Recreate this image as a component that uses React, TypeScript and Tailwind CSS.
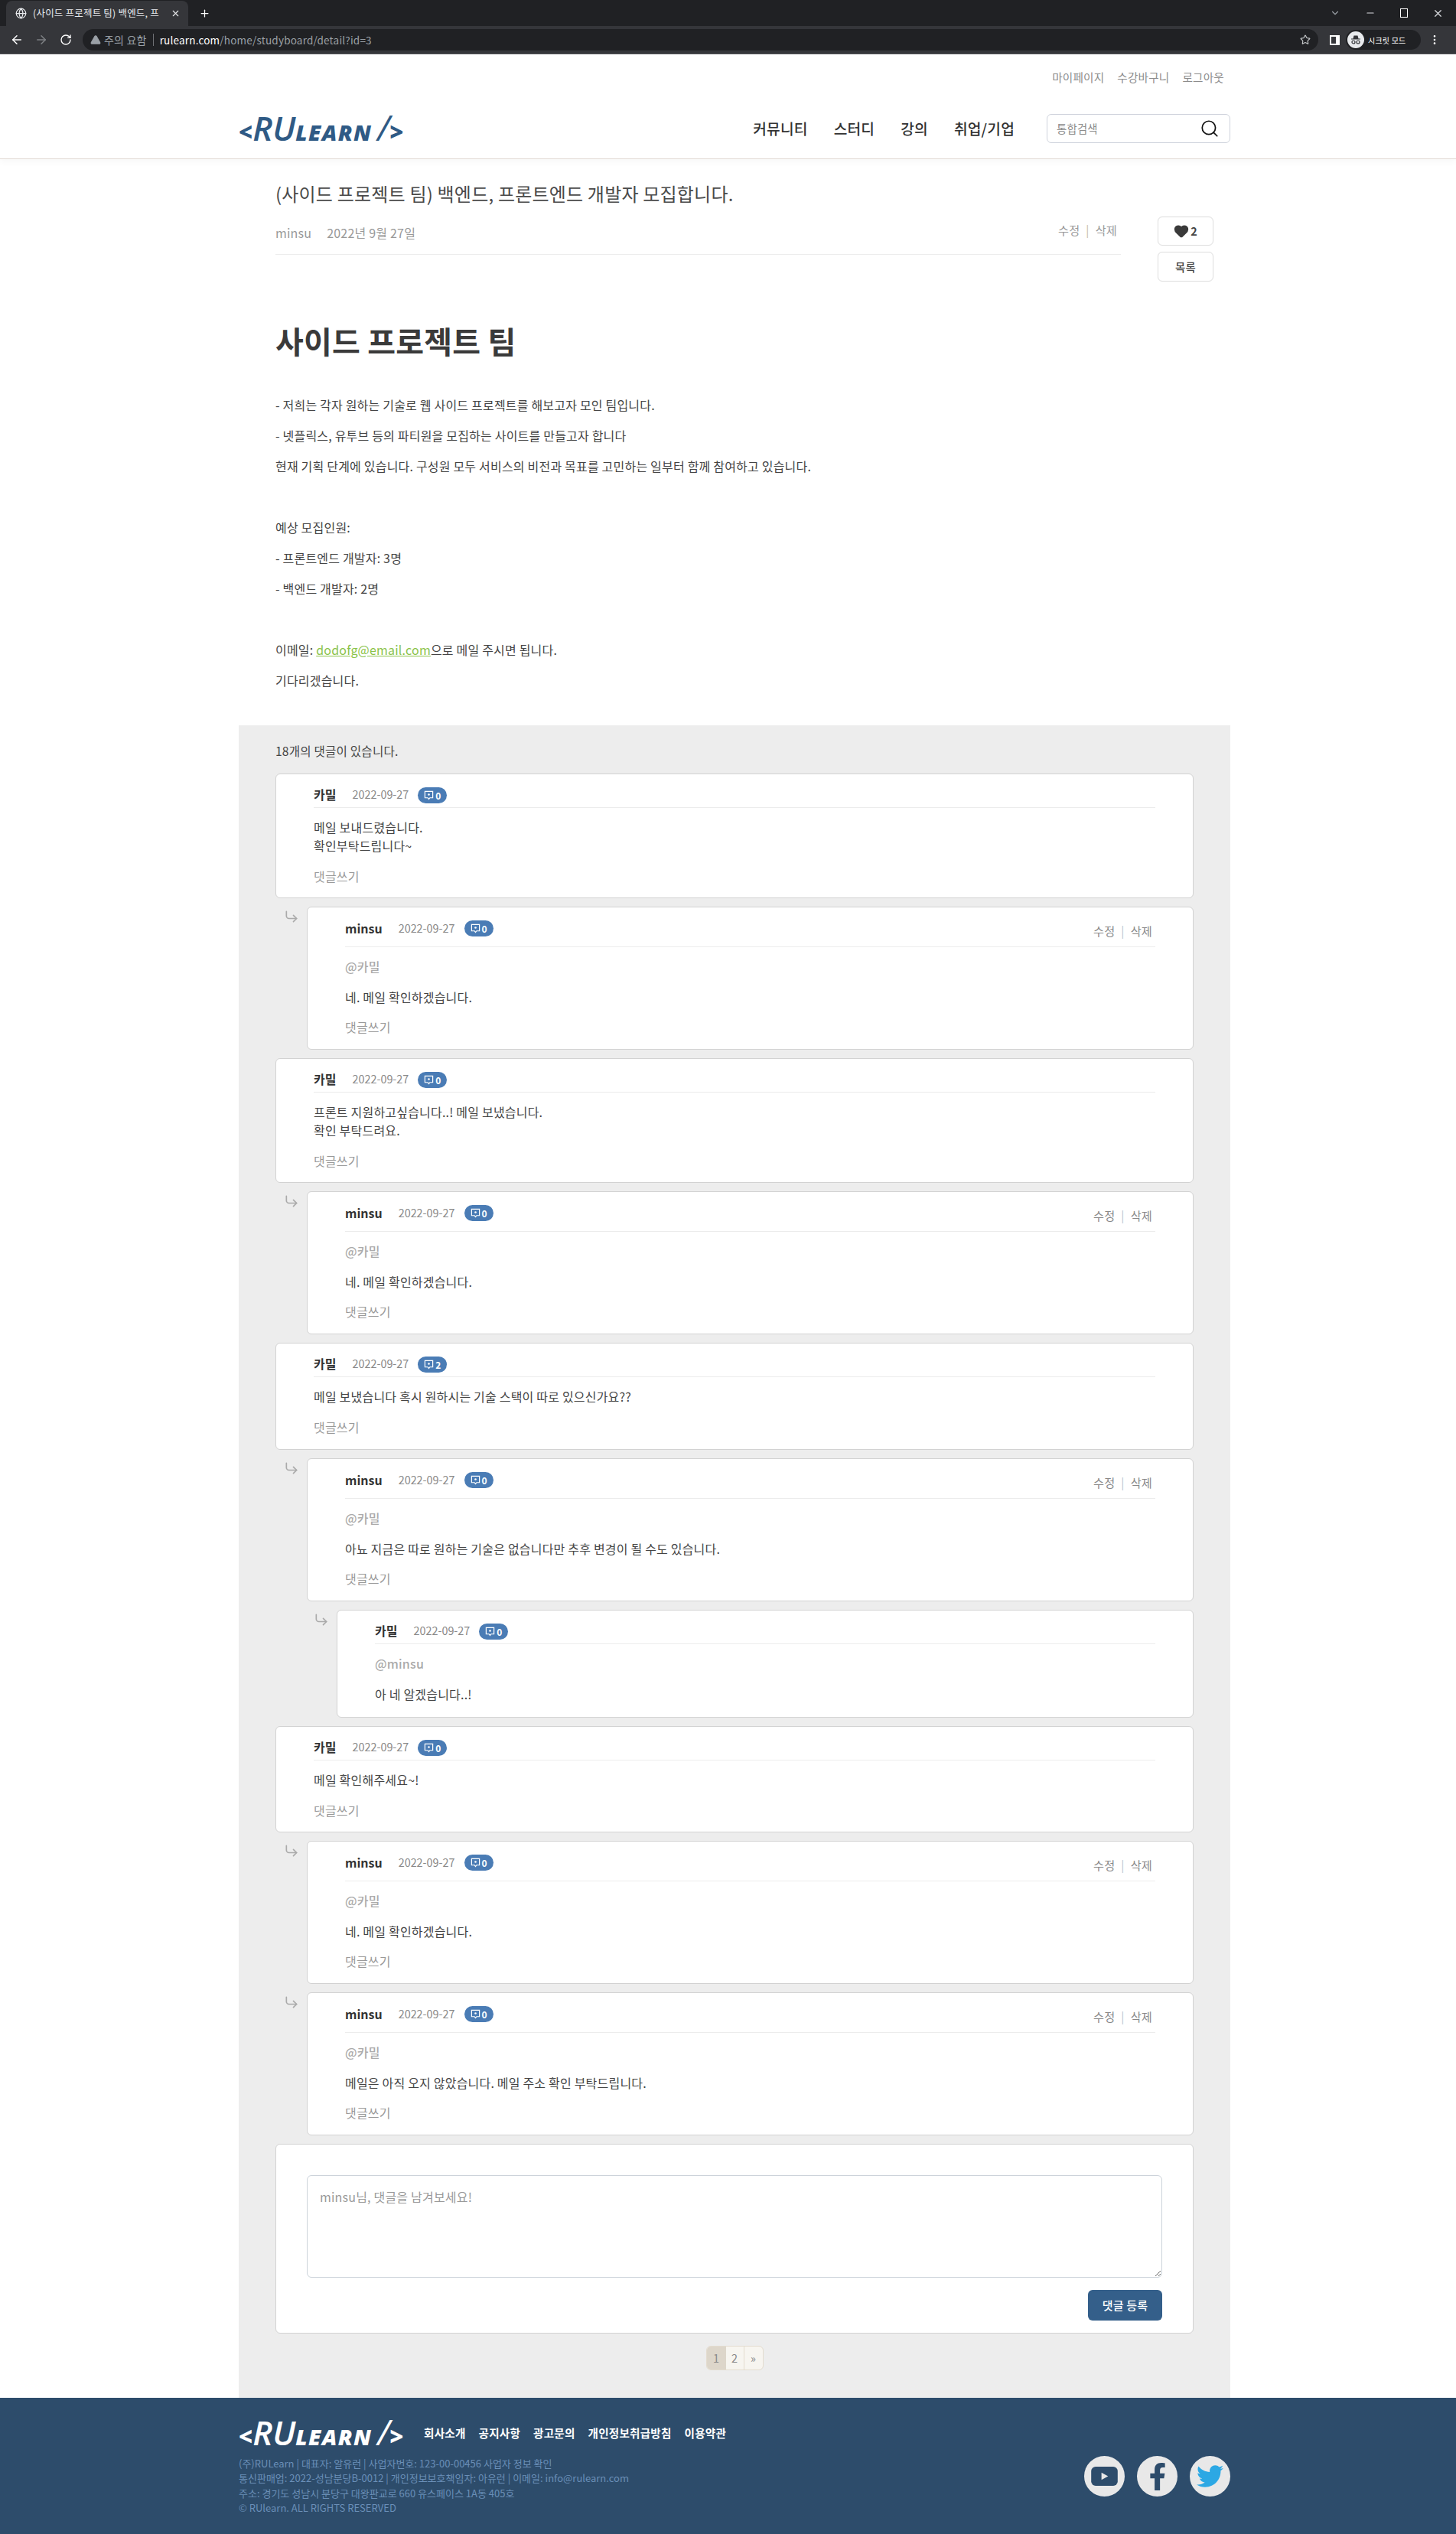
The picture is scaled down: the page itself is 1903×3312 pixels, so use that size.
import { ArrowLeft, ArrowRight, CornerDownRight, RotateCw, Star, Search, Heart, Plus, X, Minus, ChevronDown, MoreVertical, AlertTriangle, Globe } from "lucide-react";
import { FaFacebookF, FaTwitter } from "react-icons/fa";

type Item = {
  id: number;
  name: string;
  level: 0 | 1 | 2;
  count: number;
  mention?: string;
  lines: string[];
  mine?: boolean;
  noReply?: boolean;
  height: string;
};

const comments: Item[] = [
  { id: 1, name: "카밀", level: 0, count: 0, lines: ["메일 보내드렸습니다.", "확인부탁드립니다~"], height: "h-[163px]" },
  { id: 2, name: "minsu", level: 1, count: 0, mention: "@카밀", lines: ["네. 메일 확인하겠습니다."], mine: true, height: "h-[187px]" },
  { id: 3, name: "카밀", level: 0, count: 0, lines: ["프론트 지원하고싶습니다..! 메일 보냈습니다.", "확인 부탁드려요."], height: "h-[163px]" },
  { id: 4, name: "minsu", level: 1, count: 0, mention: "@카밀", lines: ["네. 메일 확인하겠습니다."], mine: true, height: "h-[187px]" },
  { id: 5, name: "카밀", level: 0, count: 2, lines: ["메일 보냈습니다 혹시 원하시는 기술 스택이 따로 있으신가요??"], height: "h-[140px]" },
  { id: 6, name: "minsu", level: 1, count: 0, mention: "@카밀", lines: ["아뇨 지금은 따로 원하는 기술은 없습니다만 추후 변경이 될 수도 있습니다."], mine: true, height: "h-[187px]" },
  { id: 7, name: "카밀", level: 2, count: 0, mention: "@minsu", lines: ["아 네 알겠습니다..!"], noReply: true, height: "h-[141px]" },
  { id: 8, name: "카밀", level: 0, count: 0, lines: ["메일 확인해주세요~!"], height: "h-[139px]" },
  { id: 9, name: "minsu", level: 1, count: 0, mention: "@카밀", lines: ["네. 메일 확인하겠습니다."], mine: true, height: "h-[187px]" },
  { id: 10, name: "minsu", level: 1, count: 0, mention: "@카밀", lines: ["메일은 아직 오지 않았습니다. 메일 주소 확인 부탁드립니다."], mine: true, height: "h-[187px]" },
];

function BrowserBar() {
  return (
    <div className="h-[71px] bg-[#35363a] text-white border-b border-[#55565b]">
      <div className="h-[34px] bg-[#202124] flex items-end pl-2">
        <div className="w-[238px] h-[33px] bg-[#35363a] rounded-t-lg flex items-center pl-3 pr-2 text-[12.5px] text-[#e8eaed]">
          <Globe size={15} className="shrink-0 mr-[8px]" />
          <span className="w-[172px] whitespace-nowrap">(사이드 프로젝트 팀) 백엔드, 프</span>
          <X size={13} className="ml-2" />
        </div>
        <Plus size={15} className="ml-[14px] mb-[9px]" />
        <div className="flex-1 flex items-center justify-end self-center gap-[32px] pr-4 text-[#dadce0]">
          <ChevronDown size={14} className="text-[#9aa0a6]" />
          <Minus size={14} />
          <div className="w-[10px] h-[12px] border border-white" />
          <X size={15} />
        </div>
      </div>
      <div className="h-[36px] flex items-center pl-[13px]">
        <ArrowLeft size={18} />
        <ArrowRight size={18} className="ml-[14px] text-[#7e8084]" />
        <RotateCw size={16} className="ml-[15px]" />
        <div className="ml-[14px] w-[1615px] h-[28px] rounded-full bg-[#202124] flex items-center pl-[10px] text-[13.5px]">
          <AlertTriangle size={14} className="text-[#9aa0a6] fill-[#9aa0a6]" />
          <span className="ml-[4px] text-[14px] text-[#9aa0a6]">주의 요함</span>
          <span className="mx-2 w-px h-[16px] bg-[#6f7175]" />
          <span className="text-white">rulearn.com</span>
          <span className="text-[#9aa0a6]">/home/studyboard/detail?id=3</span>
          <Star size={14} className="ml-auto mr-[10px] text-[#c4c7c9]" />
        </div>
        <div className="ml-[15px] w-[13px] h-[13px] border-2 border-white border-r-[5px]" />
        <div className="ml-[8px] w-[98px] h-[26px] rounded-full bg-[#202124] flex items-center pl-[2px] gap-[5px] text-[10px]">
          <span className="w-[22px] h-[22px] rounded-full bg-[#e8eaed] flex items-center justify-center">
            <svg viewBox="0 0 16 16" className="w-4 h-4" fill="none" stroke="#35363a" strokeWidth="1.2">
              <path d="M2 7h12M5 7l1-4h4l1 4" fill="#35363a" />
              <circle cx="5" cy="11" r="2" />
              <circle cx="11" cy="11" r="2" />
            </svg>
          </span>
          시크릿 모드
        </div>
        <MoreVertical size={16} className="ml-[10px]" />
      </div>
    </div>
  );
}

function Logo({ tone }: { tone: string }) {
  return (
    <div className={`w-[218px] -mt-[4px] shrink-0 flex items-baseline italic font-bold font-['Open_Sans',sans-serif] whitespace-nowrap leading-none tracking-normal ${tone}`}>
      <span className="text-[31px] not-italic font-extrabold">&lt;</span>
      <span className="text-[44px] font-semibold">RU</span>
      <span className="text-[29px] font-extrabold tracking-[1.4px]">LEARN</span>
      <span className="text-[46px] ml-[7px] font-normal">/</span>
      <span className="text-[31px] not-italic font-extrabold">&gt;</span>
    </div>
  );
}

function Header() {
  return (
    <header className="h-[137px] bg-white border-b border-[#e3dcd6] shadow-[0_4px_8px_rgba(0,0,0,0.03)]">
      <div className="ml-[312px] w-[1296px]">
        <div className="h-[60px] flex justify-end items-center gap-[17px] pr-2 text-[14.6px] text-[#8c8c8c]">
          <span>마이페이지</span>
          <span>수강바구니</span>
          <span>로그아웃</span>
        </div>
        <div className="h-[74px] flex items-center">
          <Logo tone="text-[#2f5a85]" />
          <nav className="ml-auto flex items-center gap-[34px] text-[19.2px] font-medium text-[#333]">
            <span>커뮤니티</span>
            <span>스터디</span>
            <span>강의</span>
            <span>취업/기업</span>
          </nav>
          <div className="ml-[42px] w-[240px] h-[38px] border border-[#cfd3dc] rounded-md flex items-center pl-3 pr-[13px] text-[14.4px] text-[#8c8c8c]">
            통합검색
            <Search size={26} strokeWidth={1.6} className="ml-auto text-[#111]" />
          </div>
        </div>
      </div>
    </header>
  );
}

function Post() {
  return (
    <section className="ml-[312px] w-[1296px] pl-12 pt-[27px] text-[#444]">
      <h1 className="text-[24px] leading-[36px] text-[#4a4a4a]">(사이드 프로젝트 팀) 백엔드, 프론트엔드 개발자 모집합니다.</h1>
      <div className="flex">
        <div className="w-[1105px]">
          <div className="mt-2 h-[54px] flex items-center text-[16px] text-[#999] border-b border-[#ececec] pb-[4px]">
            <span>minsu</span>
            <span className="ml-5">2022년 9월 27일</span>
            <span className="ml-auto mr-[5px] text-[15.2px] mb-[6px]">
              수정<span className="mx-[8px] text-[#c8b9a5]">|</span>삭제
            </span>
          </div>
        </div>
        <div className="ml-12 mt-[12px] w-[73px] flex flex-col gap-2 text-[14.4px] font-medium text-[#444]">
          <button className="h-[38px] bg-white border border-[#ddd] rounded-md flex items-center justify-center gap-[2px] font-bold">
            <Heart size={20} className="fill-[#3a3a3a] text-[#3a3a3a]" />2
          </button>
          <button className="h-[39px] bg-white border border-[#ddd] rounded-md">목록</button>
        </div>
      </div>
      <h2 className="mt-[47px] text-[40px] leading-[60px] font-bold text-[#3a3a3a]">사이드 프로젝트 팀</h2>
      <div className="mt-[34px] text-[16px] leading-[40px] h-[439px]">
        <p>- 저희는 각자 원하는 기술로 웹 사이드 프로젝트를 해보고자 모인 팀입니다.</p>
        <p>- 넷플릭스, 유투브 등의 파티원을 모집하는 사이트를 만들고자 합니다</p>
        <p>현재 기획 단계에 있습니다. 구성원 모두 서비스의 비전과 목표를 고민하는 일부터 함께 참여하고 있습니다.</p>
        <p className="h-10" />
        <p>예상 모집인원:</p>
        <p>- 프론트엔드 개발자: 3명</p>
        <p>- 백엔드 개발자: 2명</p>
        <p className="h-10" />
        <p>
          이메일: <a className="text-[#8bc34a] underline">dodofg@email.com</a>으로 메일 주시면 됩니다.
        </p>
        <p>기다리겠습니다.</p>
      </div>
    </section>
  );
}

function Badge({ count }: { count: number }) {
  return (
    <span className="ml-3 mt-1 w-[38px] h-[21px] rounded-full bg-[#4a7cb5] flex items-center justify-center gap-[2px] text-white text-[12px] font-bold tracking-normal">
      <svg viewBox="0 0 14 14" className="w-[13px] h-[13px]" fill="none" stroke="currentColor" strokeWidth="1.3">
        <path d="M1.5 1.5h11v9H8.5L7 12.5 5.5 10.5h-4z" />
        <circle cx="7" cy="6" r="1.4" fill="currentColor" stroke="none" />
      </svg>
      {count}
    </span>
  );
}

function Comment({ item }: { item: Item }) {
  const indent = item.level === 0 ? "" : item.level === 1 ? "ml-[41px]" : "ml-[80px]";
  return (
    <div className={`relative ${indent}`}>
      {item.level > 0 && (
        <CornerDownRight size={20} strokeWidth={2} className="absolute -left-[30px] top-[3px] text-[#aaa]" />
      )}
      <div className={`${item.height} bg-white border border-[#d2d2d2] rounded-md px-[49px] pt-[13px] text-[16px] leading-[24px] text-[#444]`}>
        <div className={`${item.mine ? "h-[39px]" : "h-[31px]"} border-b border-[#ececec] flex items-start`}>
          <span className={`font-bold tracking-normal text-[#333] ${item.mine ? "leading-[28px]" : "leading-[26px]"}`}>{item.name}</span>
          <span className={`ml-[21px] text-[14.4px] tracking-normal text-[#888] ${item.mine ? "leading-[28px]" : "leading-[26px]"}`}>2022-09-27</span>
          <Badge count={item.count} />
          {item.mine && (
            <span className="ml-auto mr-1 mt-[5px] text-[15.2px] text-[#888]">
              수정<span className="mx-[8px] text-[#b9c4cf]">|</span>삭제
            </span>
          )}
        </div>
        {item.mention && <p className="mt-[13px] mb-4 font-medium text-[#aaa]">{item.mention}</p>}
        <div className={item.mention ? "" : "mt-[13px]"}>
          {item.lines.map((l) => (
            <p key={l}>{l}</p>
          ))}
        </div>
        {!item.noReply && <p className={`${item.mention ? "mt-[15px]" : "mt-[16px]"} text-[#999]`}>댓글쓰기</p>}
      </div>
    </div>
  );
}

function CommentForm() {
  return (
    <div className="h-[248px] bg-white border border-[#d2d2d2] rounded-md px-10 pt-10">
      <textarea
        placeholder="minsu님, 댓글을 남겨보세요!"
        className="block w-full h-[134px] border border-[#ccd3da] rounded-md px-4 py-[15px] text-[16px] leading-[24px] placeholder:text-[#999]"
      />
      <div className="mt-4 flex justify-end">
        <button className="w-[97px] h-10 bg-[#345f8a] rounded-md text-white text-[15px] font-medium">댓글 등록</button>
      </div>
    </div>
  );
}

function Pagination() {
  return (
    <div className="mt-4 flex justify-center text-[14.4px] text-[#888]">
      <div className="flex h-[32px] rounded-md overflow-hidden border border-[#e3dccf] bg-[#f7f5f0]">
        <span className="w-[25px] bg-[#ddd6ca] flex items-center justify-center">1</span>
        <span className="w-[24px] flex items-center justify-center border-r border-[#e3dccf]">2</span>
        <span className="w-[24px] flex items-center justify-center">»</span>
      </div>
    </div>
  );
}

function Comments() {
  return (
    <section className="ml-[312px] w-[1296px] h-[2186px] bg-[#ededed] px-12 pt-[21px]">
      <p className="text-[15.6px] leading-[24px] text-[#444]">18개의 댓글이 있습니다.</p>
      <div className="mt-[18px] flex flex-col gap-[11px]">
        {comments.map((c) => (
          <Comment key={c.id} item={c} />
        ))}
        <CommentForm />
      </div>
      <Pagination />
    </section>
  );
}

function YouTubeMark() {
  return (
    <svg viewBox="0 0 36 26" className="w-[35px] h-[25px]">
      <rect x="0" y="0" width="36" height="26" rx="6" fill="#2d4c6b" />
      <path d="M14 8l9 5-9 5z" fill="#e8e8e8" />
    </svg>
  );
}

function Footer() {
  return (
    <footer className="h-[178px] bg-[#2d4c6b]">
      <div className="ml-[312px] w-[1296px] flex">
        <div className="flex-1">
          <div className="pt-[29px] h-[63px] flex items-center">
            <Logo tone="text-white" />
            <div className="ml-6 flex gap-[17px] text-[14.6px] font-bold text-white">
              <span>회사소개</span>
              <span>공지사항</span>
              <span>광고문의</span>
              <span>개인정보취급방침</span>
              <span>이용약관</span>
            </div>
          </div>
          <div className="mt-[13px] text-[13px] leading-[19.3px] tracking-normal text-[#6a8fb8]">
            <p>(주)RULearn | 대표자: 알유런 | 사업자번호: 123-00-00456 사업자 정보 확인</p>
            <p>통신판매업: 2022-성남분당B-0012 | 개인정보보호책임자: 아유런 | 이메일: info@rulearn.com</p>
            <p>주소: 경기도 성남시 분당구 대왕판교로 660 유스페이스 1A동 405호</p>
            <p>© RUlearn. ALL RIGHTS RESERVED</p>
          </div>
        </div>
        <div className="pt-[76px] flex gap-4">
          <span className="w-[53px] h-[53px] rounded-full bg-[#e8e8e8] flex items-center justify-center">
            <YouTubeMark />
          </span>
          <span className="w-[53px] h-[53px] rounded-full bg-[#e8e8e8] flex items-center justify-center text-[#2d4c6b]">
            <FaFacebookF size={36} />
          </span>
          <span className="w-[53px] h-[53px] rounded-full bg-[#e8e8e8] flex items-center justify-center text-[#2ca8e4]">
            <FaTwitter size={35} />
          </span>
        </div>
      </div>
    </footer>
  );
}

export default function App() {
  return (
    <div className="w-[1903px] h-[3312px] overflow-hidden bg-white tracking-[0.2px] font-['Noto_Sans_CJK_KR','Noto_Sans',sans-serif]">
      <BrowserBar />
      <Header />
      <Post />
      <Comments />
      <Footer />
    </div>
  );
}
